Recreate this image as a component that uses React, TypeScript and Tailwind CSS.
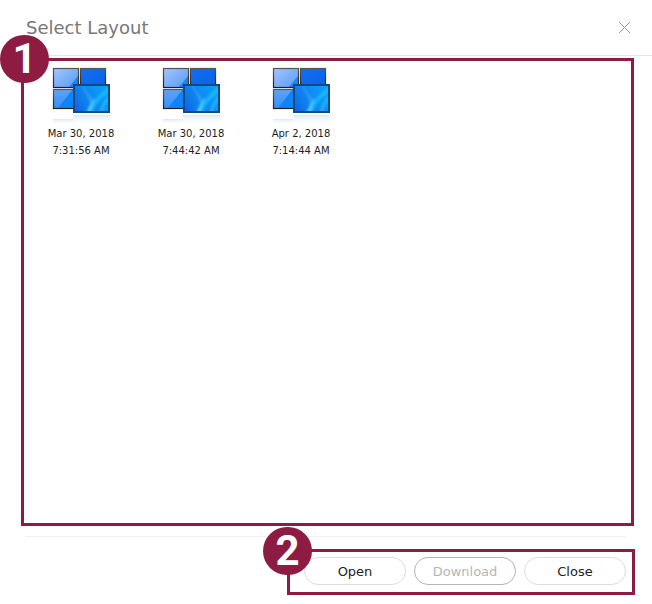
import React from "react";

const layouts = [
  { id: 1, date: "Mar 30, 2018", time: "7:31:56 AM" },
  { id: 2, date: "Mar 30, 2018", time: "7:44:42 AM" },
  { id: 3, date: "Apr 2, 2018", time: "7:14:44 AM" },
];

// Gradients shared by all the layout icons
function IconDefs() {
  return (
    <svg className="absolute h-0 w-0" aria-hidden="true">
      <defs>
        <linearGradient id="pale" x1="0" y1="0" x2="1" y2="1">
          <stop offset="0" stopColor="#a5c6fc" />
          <stop offset="1" stopColor="#5599f8" />
        </linearGradient>
        <linearGradient id="deep" x1="0" y1="0" x2="1" y2="1">
          <stop offset="0" stopColor="#0f6ff0" />
          <stop offset="1" stopColor="#0c62e4" />
        </linearGradient>
        <linearGradient id="mid" x1="0" y1="0" x2="0" y2="1">
          <stop offset="0" stopColor="#5ea3fa" />
          <stop offset="1" stopColor="#3590f8" />
        </linearGradient>
        <linearGradient id="front" x1="0" y1="1" x2="1" y2="0.6">
          <stop offset="0" stopColor="#0f5fdd" />
          <stop offset="0.4" stopColor="#0f80ee" />
          <stop offset="1" stopColor="#0c9cfa" />
        </linearGradient>
        <linearGradient id="frame" x1="0" y1="0" x2="0" y2="1">
          <stop offset="0" stopColor="#59544e" />
          <stop offset="1" stopColor="#1f1f20" />
        </linearGradient>
        <linearGradient id="mirror" x1="0" y1="0" x2="0" y2="1">
          <stop offset="0" stopColor="#9fb4cc" stopOpacity="0.35" />
          <stop offset="0.25" stopColor="#c3dcf5" stopOpacity="0.35" />
          <stop offset="1" stopColor="#d8e8f8" stopOpacity="0" />
        </linearGradient>
        <filter id="soft">
          <feGaussianBlur stdDeviation="0.8" />
        </filter>
        <clipPath id="screen">
          <rect x="23" y="19" width="33" height="25" />
        </clipPath>
      </defs>
    </svg>
  );
}

function LayoutIcon() {
  return (
    <svg width="58" height="58" viewBox="0 0 58 58" aria-hidden="true">
      {/* back panels */}
      <rect x="1.5" y="1.5" width="25" height="19" fill="url(#pale)" />
      <path d="M26 9 17 20H26z" fill="#1a84f8" />
      <rect x="1.5" y="1.5" width="25" height="19" fill="none" stroke="url(#frame)" strokeWidth="1.2" />
      <rect x="28.5" y="1.5" width="25" height="19" fill="url(#deep)" stroke="url(#frame)" strokeWidth="1.2" />
      <rect x="1.5" y="22.5" width="25" height="19" fill="url(#mid)" />
      <path d="M21 22 6 41H26V22z" fill="#1083fa" />
      <rect x="1.5" y="22.5" width="25" height="19" fill="none" stroke="url(#frame)" strokeWidth="1.2" />
      {/* front panel */}
      <rect x="22" y="18" width="35" height="27" fill="url(#front)" />
      <g clipPath="url(#screen)">
        <g filter="url(#soft)">
          <path d="M37 46C39 36 46 28 57 18V26C49 31 43 37 41 46z" fill="#19b9ff" opacity="0.8" />
          <path d="M48 46C49 38 52 33 57 29V33C53 37 51 41 51 46z" fill="#27c2ff" opacity="0.7" />
          <path d="M31 18C34 25 39 28 41 33L38 38C37 30 33 25 29 18z" fill="#3aa2f7" opacity="0.7" />
          <path d="M34 46C37 40 39 36 43 30C42 36 39 40 38 46z" fill="#5fdcff" opacity="0.85" />
        </g>
      </g>
      <rect x="22" y="18" width="35" height="27" fill="none" stroke="#124a7b" strokeWidth="2" />
      {/* reflection */}
      <rect x="1" y="52" width="20" height="5" fill="url(#mirror)" />
      <rect x="21" y="48" width="37" height="9" fill="url(#mirror)" />
    </svg>
  );
}

function Badge({ className, children }: { className: string; children: React.ReactNode }) {
  return (
    <span
      className={`absolute flex h-12 w-[49px] items-center justify-center rounded-full bg-[#8e1b41] font-[Roboto,'Liberation_Sans',sans-serif] text-[42px] leading-none font-bold text-white ${className}`}
    >
      {children}
    </span>
  );
}

export default function App() {
  return (
    <div className="flex min-h-screen flex-col bg-white font-['DejaVu_Sans',Verdana,sans-serif] text-[#222]">
      <IconDefs />

      <header className="flex h-14 items-center justify-between border-b border-[#e6e6e6] pr-[21px] pl-[26px]">
        <h1 className="text-lg text-[#777]">Select Layout</h1>
        <button type="button" aria-label="Close dialog" className="cursor-pointer">
          <svg width="13" height="13" viewBox="0 0 13 13" stroke="#999" fill="none">
            <path d="M1 1 12 12M12 1 1 12" />
          </svg>
        </button>
      </header>

      <main className="relative mt-0.5 mr-[18px] ml-[21px] flex-1 border-3 border-[#8e1b41]">
        <Badge className="-top-[26px] -left-6">1</Badge>
        <ul className="flex flex-wrap px-0.5 pt-1.5">
          {layouts.map((layout) => (
            <li key={layout.id} className="w-[110px]">
              <button
                type="button"
                className="flex w-full cursor-pointer flex-col items-center text-[10px] leading-[17px]"
              >
                <LayoutIcon />
                <span>{layout.date}</span>
                <span>{layout.time}</span>
              </button>
            </li>
          ))}
        </ul>
      </main>

      <footer className="pt-2.5 pb-[9px]">
        <div className="mr-[26px] ml-[26px] border-t border-[#f1f1f1]" />
        <div className="relative mt-3 mr-[17px] ml-auto flex w-fit gap-2 border-3 border-[#8e1b41] pt-[5px] pr-1.5 pb-[7px] pl-3.5 text-[13px]">
          <Badge className="-top-[25px] -left-[27px]">2</Badge>
          <button type="button" className="h-7 w-[102px] cursor-pointer rounded-full border border-[#ddd] pt-0.5">
            Open
          </button>
          <button type="button" disabled className="h-7 w-[102px] rounded-full border border-[#b5b5b5] pt-0.5 text-[#b5b5b5]">
            Download
          </button>
          <button type="button" className="h-7 w-[102px] cursor-pointer rounded-full border border-[#ddd] pt-0.5">
            Close
          </button>
        </div>
      </footer>
    </div>
  );
}
